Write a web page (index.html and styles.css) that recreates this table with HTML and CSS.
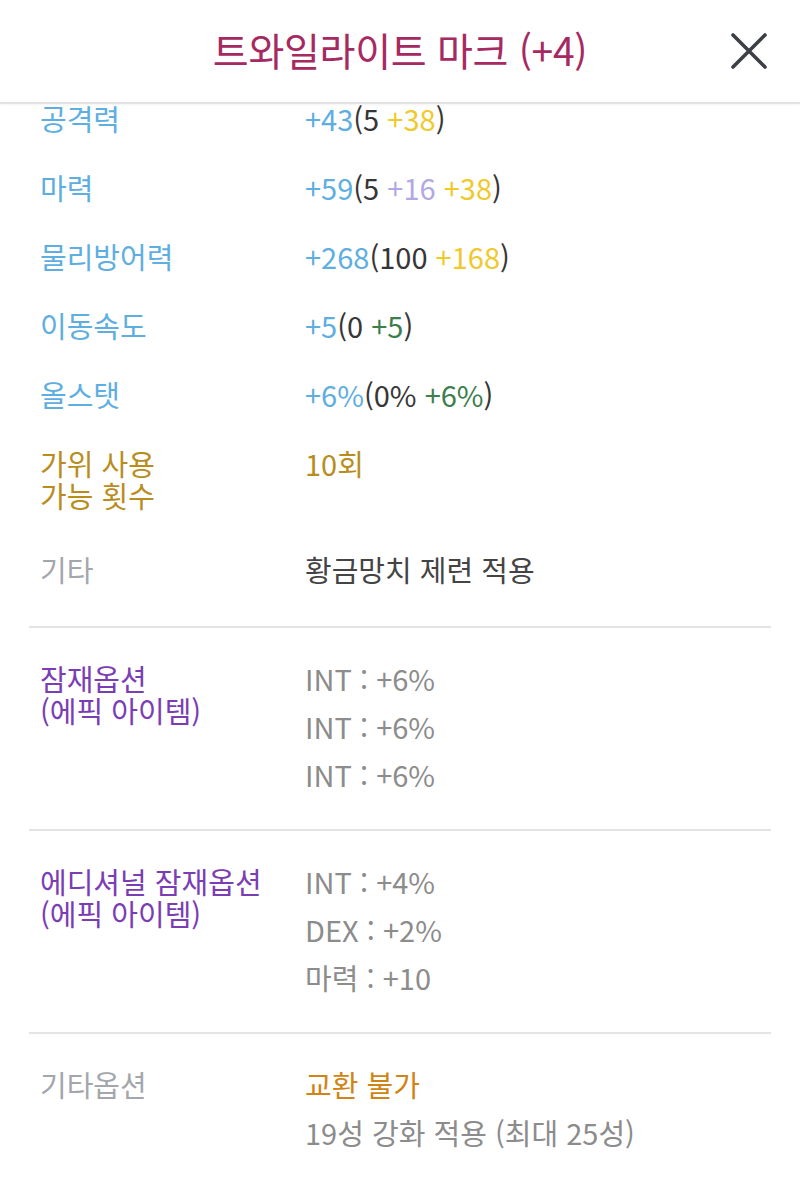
FILE: index.html
```html
<!DOCTYPE html>
<html lang="ko">
<head>
<meta charset="utf-8">
<link rel="stylesheet" href="styles.css">
</head>
<body>
<div class="sheet">
  <header class="head">
    <h1 class="title">트와일라이트 마크 (+4)</h1>
    <button class="close" aria-label="닫기">
      <svg width="36" height="36" viewBox="0 0 36 36"><path d="M2 2 L34 34 M34 2 L2 34" stroke="#3c4046" stroke-width="3.6" stroke-linecap="round"/></svg>
    </button>
  </header>
  <main class="body">
    <section class="sec sec-stats">
      <div class="row"><div class="lbl blue">공격력</div><div class="val"><span class="blue">+43</span><span class="dark">(5 </span><span class="yellow">+38</span><span class="dark">)</span></div></div>
      <div class="row"><div class="lbl blue">마력</div><div class="val"><span class="blue">+59</span><span class="dark">(5 </span><span class="lav">+16</span> <span class="yellow">+38</span><span class="dark">)</span></div></div>
      <div class="row"><div class="lbl blue">물리방어력</div><div class="val"><span class="blue">+268</span><span class="dark">(100 </span><span class="yellow">+168</span><span class="dark">)</span></div></div>
      <div class="row"><div class="lbl blue">이동속도</div><div class="val"><span class="blue">+5</span><span class="dark">(0 </span><span class="green">+5</span><span class="dark">)</span></div></div>
      <div class="row"><div class="lbl blue">올스탯</div><div class="val"><span class="blue">+6%</span><span class="dark">(0% </span><span class="green">+6%</span><span class="dark">)</span></div></div>
      <div class="row"><div class="lbl gold">가위 사용<br>가능 횟수</div><div class="val gold">10회</div></div>
      <div class="row row-more"><div class="lbl grey">기타</div><div class="val dark2">황금망치 제련 적용</div></div>
    </section>
    <section class="sec">
      <div class="row"><div class="lbl purple">잠재옵션<br>(에픽 아이템)</div>
        <div class="vals"><div class="opt">INT : +6%</div><div class="opt">INT : +6%</div><div class="opt">INT : +6%</div></div></div>
    </section>
    <section class="sec">
      <div class="row"><div class="lbl purple">에디셔널 잠재옵션<br>(에픽 아이템)</div>
        <div class="vals"><div class="opt">INT : +4%</div><div class="opt">DEX : +2%</div><div class="opt">마력 : +10</div></div></div>
    </section>
    <section class="sec last">
      <div class="row"><div class="lbl grey">기타옵션</div>
        <div class="vals"><div class="orange">교환 불가</div><div class="opt">19성 강화 적용 (최대 25성)</div></div></div>
    </section>
  </main>
</div>
</body>
</html>
```
FILE: styles.css
```css
html, body {
  margin: 0;
  padding: 0;
  background: #fff;
}
body {
  font-family: "Noto Sans CJK KR", "Noto Sans", sans-serif;
  width: 800px;
  height: 1187px;
  overflow: hidden;
}
.sheet {
  display: flex;
  flex-direction: column;
  height: 1187px;
}
.head {
  position: relative;
  z-index: 2;
  height: 102px;
  flex: 0 0 auto;
  background: #fff;
  border-bottom: 2px solid #e2e2e2;
  box-shadow: 0 1px 2px rgba(0,0,0,0.05);
  display: flex;
  align-items: center;
  justify-content: center;
}
.title {
  margin: 0 0 4px;
  font-size: 39px;
  font-weight: 400;
  color: #a62a61;
  line-height: 1;
  letter-spacing: -0.3px;
}
.close {
  position: absolute;
  right: 33px;
  top: 33px;
  width: 36px;
  height: 36px;
  padding: 0;
  border: 0;
  background: none;
  display: flex;
}
.body {
  flex: 1 1 auto;
  overflow: hidden;
  padding: 0 29px;
}
.sec {
  padding: 34px 0 39px;
  border-bottom: 2px solid #e4e4e4;
  display: flex;
  flex-direction: column;
  gap: 37px;
}
.sec-stats {
  margin-top: -8px;
  padding-top: 6px;
  padding-bottom: 41px;
}
.sec.last {
  border-bottom: 0;
}
.row {
  display: grid;
  grid-template-columns: 265px 1fr;
  padding-left: 11px;
  font-size: 29px;
  line-height: 32px;
}
.row-more {
  margin-top: 5px;
}
.vals {
  display: flex;
  flex-direction: column;
  gap: 16px;
}
.lbl { white-space: nowrap; }
.blue { color: #5eaee2; }
.dark { color: #363636; }
.dark2 { color: #444; }
.yellow { color: #f0c92c; }
.lav { color: #b2a8e4; }
.green { color: #3c7e4d; }
.gold { color: #b98d1d; }
.grey { color: #a3a7ad; }
.purple { color: #7a3db4; }
.opt { color: #8c8c8c; }
.orange { color: #cf8515; }
```
